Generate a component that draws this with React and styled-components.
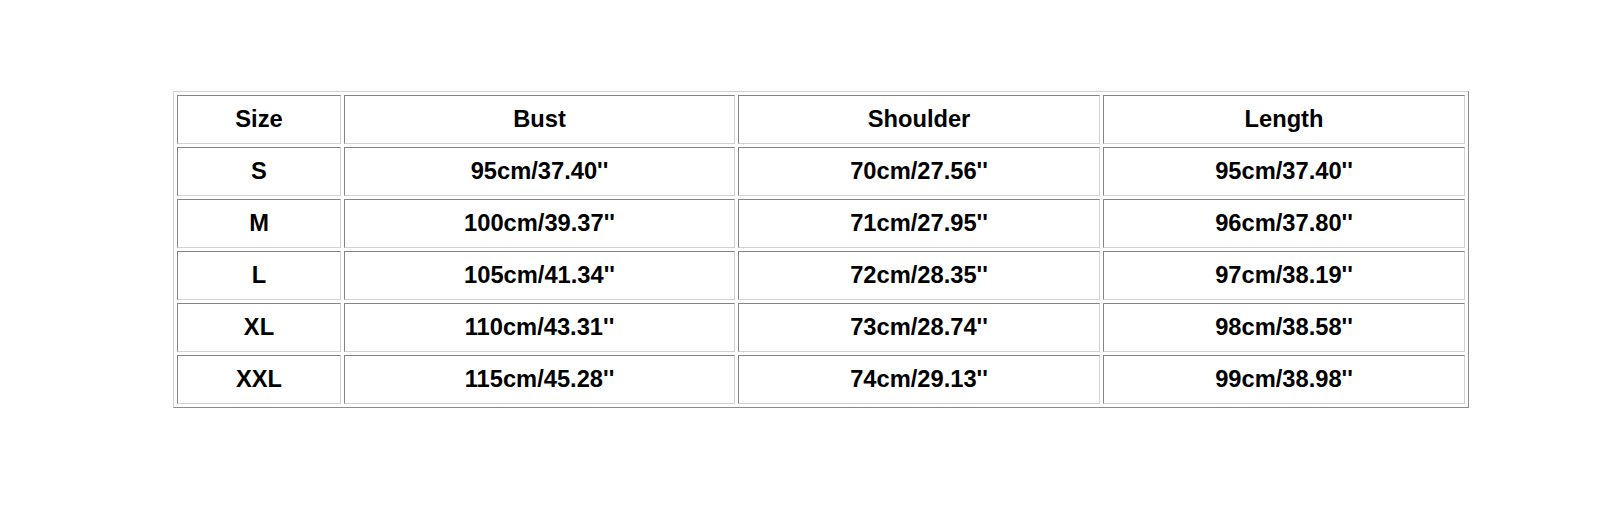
import React from 'react';
import styled, { createGlobalStyle } from 'styled-components';

const GlobalStyle = createGlobalStyle`
  html, body {
    margin: 0;
    padding: 0;
    background: #fff;
  }
  body {
    font-family: "Liberation Sans", Arial, sans-serif;
  }
`;

const Page = styled.div`
  width: 1600px;
  height: 521px;
  padding: 91px 0 0 173px;
  box-sizing: border-box;
`;

const SizeTable = styled.table`
  border-collapse: separate;
  border-spacing: 3px;
  border: 1px solid;
  border-color: #d2d2d2 #8c8c8c #8c8c8c #d2d2d2;
  table-layout: fixed;
  width: 1296px;
`;

const Cell = styled.td`
  box-sizing: border-box;
  height: 49px;
  padding: 0;
  border: 1px solid;
  border-color: #848484 #d2d2d2 #d2d2d2 #848484;
  text-align: center;
  vertical-align: middle;
  font-size: 23.7px;
  font-weight: bold;
  color: #000;
`;

const HeadCell = styled(Cell).attrs({ as: 'th' })``;

const columns = [
  { label: 'Size', width: 164 },
  { label: 'Bust', width: 391 },
  { label: 'Shoulder', width: 362 },
  { label: 'Length', width: 362 },
];

const rows = [
  ['S', "95cm/37.40''", "70cm/27.56''", "95cm/37.40''"],
  ['M', "100cm/39.37''", "71cm/27.95''", "96cm/37.80''"],
  ['L', "105cm/41.34''", "72cm/28.35''", "97cm/38.19''"],
  ['XL', "110cm/43.31''", "73cm/28.74''", "98cm/38.58''"],
  ['XXL', "115cm/45.28''", "74cm/29.13''", "99cm/38.98''"],
];

const App = () => (
  <>
    <GlobalStyle />
    <Page>
      <SizeTable>
        <colgroup>
          {columns.map((col) => (
            <col key={col.label} style={{ width: col.width }} />
          ))}
        </colgroup>
        <thead>
          <tr>
            {columns.map((col) => (
              <HeadCell key={col.label}>{col.label}</HeadCell>
            ))}
          </tr>
        </thead>
        <tbody>
          {rows.map((row) => (
            <tr key={row[0]}>
              {row.map((value, i) => (
                <Cell key={i}>{value}</Cell>
              ))}
            </tr>
          ))}
        </tbody>
      </SizeTable>
    </Page>
  </>
);

export default App;
